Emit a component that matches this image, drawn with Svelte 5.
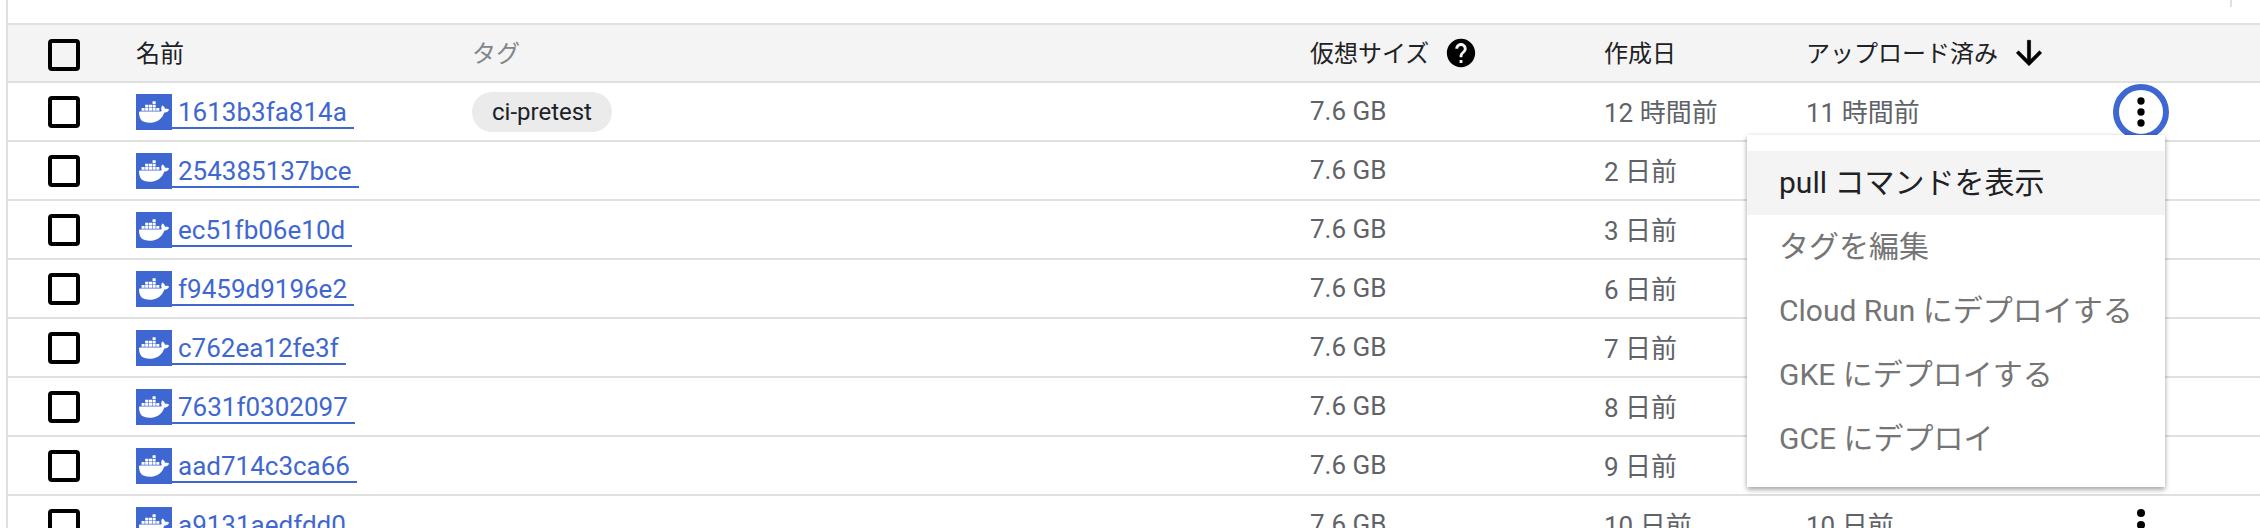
<script>
  const rows = [
    { id: '1613b3fa814a', tag: 'ci-pretest', created: '12 時間前', uploaded: '11 時間前', focused: true },
    { id: '254385137bce', created: '2 日前', uploaded: '2 日前' },
    { id: 'ec51fb06e10d', created: '3 日前', uploaded: '3 日前' },
    { id: 'f9459d9196e2', created: '6 日前', uploaded: '6 日前' },
    { id: 'c762ea12fe3f', created: '7 日前', uploaded: '7 日前' },
    { id: '7631f0302097', created: '8 日前', uploaded: '8 日前' },
    { id: 'aad714c3ca66', created: '9 日前', uploaded: '9 日前' },
    { id: 'a9131aedfdd0', created: '10 日前', uploaded: '10 日前' }
  ];

  const menu = [
    { label: 'pull コマンドを表示', active: true },
    { label: 'タグを編集' },
    { label: 'Cloud Run にデプロイする' },
    { label: 'GKE にデプロイする' },
    { label: 'GCE にデプロイ' }
  ];

  const whale =
    'M13.983 11.078h2.119a.186.186 0 00.186-.185V9.006a.186.186 0 00-.186-.186h-2.119a.185.185 0 00-.185.185v1.888c0 .102.083.185.185.185m-2.954-5.43h2.118a.186.186 0 00.186-.186V3.574a.186.186 0 00-.186-.185h-2.118a.185.185 0 00-.185.185v1.888c0 .102.082.185.185.186m0 2.716h2.118a.187.187 0 00.186-.186V6.29a.186.186 0 00-.186-.185h-2.118a.185.185 0 00-.185.185v1.887c0 .102.082.185.185.186m-2.93 0h2.12a.186.186 0 00.184-.186V6.29a.185.185 0 00-.185-.185H8.1a.185.185 0 00-.185.185v1.887c0 .102.083.185.185.186m-2.964 0h2.119a.186.186 0 00.185-.186V6.29a.185.185 0 00-.185-.185H5.136a.186.186 0 00-.186.185v1.887c0 .102.084.185.186.186m5.893 2.715h2.118a.186.186 0 00.186-.185V9.006a.186.186 0 00-.186-.186h-2.118a.185.185 0 00-.185.185v1.888c0 .102.082.185.185.185m-2.93 0h2.12a.185.185 0 00.184-.185V9.006a.185.185 0 00-.184-.186h-2.12a.185.185 0 00-.184.185v1.888c0 .102.083.185.185.185m-2.964 0h2.119a.185.185 0 00.185-.185V9.006a.185.185 0 00-.184-.186h-2.12a.186.186 0 00-.186.186v1.887c0 .102.084.185.186.185m-2.92 0h2.12a.185.185 0 00.184-.185V9.006a.185.185 0 00-.184-.186h-2.12a.185.185 0 00-.184.185v1.888c0 .102.082.185.185.185M23.763 9.89c-.065-.051-.672-.51-1.954-.51-.338.001-.676.03-1.01.087-.248-1.7-1.653-2.53-1.716-2.566l-.344-.199-.226.327c-.284.438-.49.922-.612 1.43-.23.97-.09 1.882.403 2.661-.595.332-1.55.413-1.744.42H.751a.751.751 0 00-.75.748 11.376 11.376 0 00.692 4.062c.545 1.428 1.355 2.48 2.41 3.124 1.18.723 3.1 1.137 5.275 1.137.983.003 1.963-.086 2.93-.266a12.248 12.248 0 003.823-1.389c.98-.567 1.86-1.288 2.61-2.136 1.252-1.418 1.998-2.997 2.553-4.4h.221c1.372 0 2.215-.549 2.68-1.009.309-.293.55-.65.707-1.046l.098-.288Z';
</script>

<div class="page">
  <div class="top"><span class="tick"></span></div>

  <div class="row head">
    <div class="cell-check"><span class="check"></span></div>
    <div class="cap">名前</div>
    <div class="cap muted">タグ</div>
    <div class="with-icon">
      <span class="cap">仮想サイズ</span>
      <svg class="help" viewBox="0 0 24 24" width="34" height="34" aria-hidden="true">
        <path d="M12 2C6.48 2 2 6.48 2 12s4.48 10 10 10 10-4.48 10-10S17.52 2 12 2zm1 17h-2v-2h2v2zm2.07-7.75l-.9.92C13.45 12.9 13 13.5 13 15h-2v-.5c0-1.1.45-2.1 1.17-2.83l1.24-1.26c.37-.36.59-.86.59-1.41 0-1.1-.9-2-2-2s-2 .9-2 2H8c0-2.21 1.79-4 4-4s4 1.79 4 4c0 .88-.36 1.68-.93 2.25z" />
      </svg>
    </div>
    <div class="cap">作成日</div>
    <div class="with-icon">
      <span class="cap">アップロード済み</span>
      <svg class="sort" viewBox="0 0 24 24" width="38" height="38" aria-hidden="true">
        <path d="M20 12l-1.41-1.41L13 16.17V4h-2v12.17l-5.58-5.59L4 12l8 8 8-8z" />
      </svg>
    </div>
    <div></div>
  </div>

  {#each rows as row}
    <div class="row">
      <div class="cell-check"><span class="check"></span></div>
      <div>
        <a class="link" href="#{row.id}">
          <span class="badge">
            <svg viewBox="0 0 24 24" width="30" height="30" aria-hidden="true"><path d={whale} fill="#fff" /></svg>
          </span>
          <span class="hash">{row.id}</span>
        </a>
      </div>
      <div>
        {#if row.tag}<span class="chip">{row.tag}</span>{/if}
      </div>
      <div class="value">7.6 GB</div>
      <div class="value">{row.created}</div>
      <div class="value">{row.uploaded}</div>
      <div>
        <button class="kebab" class:focused={row.focused} aria-label="その他">
          <svg viewBox="0 0 24 24" width="48" height="48" aria-hidden="true">
            <circle cx="12" cy="6" r="2" /><circle cx="12" cy="12" r="2" /><circle cx="12" cy="18" r="2" />
          </svg>
        </button>
      </div>
    </div>
  {/each}

  <ul class="menu">
    {#each menu as item}
      <li class:active={item.active}>{item.label}</li>
    {/each}
  </ul>
</div>

<style>
  :global(body) {
    margin: 0;
    overflow: hidden;
    background: #fff;
  }
  .page {
    position: relative;
    margin-left: 6px;
    border-left: 2px solid #e0e0e0;
    height: 528px;
    overflow: hidden;
    font-family: Roboto, 'Noto Sans CJK JP', sans-serif;
    font-size: 24px;
    color: #202124;
  }
  .top {
    height: 23px;
    display: flex;
    justify-content: flex-end;
    padding-right: 28px;
  }
  .tick {
    width: 2px;
    height: 7px;
    background: #e0e0e0;
  }
  .row {
    display: grid;
    grid-template-columns: 128px 336px 838px 294px 202px 307px 1fr;
    align-items: center;
    height: 57px;
    border-bottom: 2px solid #e0e0e0;
  }
  .head {
    background: #f4f4f4;
    height: 56px;
    border-top: 2px solid #e0e0e0;
  }
  .cap {
    margin-bottom: 3px;
  }
  .muted {
    color: #80868b;
  }
  .with-icon {
    display: flex;
    align-items: center;
    gap: 15px;
  }
  .cell-check {
    padding-left: 40px;
    display: flex;
  }
  .check {
    width: 32px;
    height: 32px;
    box-sizing: border-box;
    border: 4px solid #000;
    border-radius: 4px;
  }
  .head .check {
    margin-top: 4px;
  }
  .help {
    fill: #000;
  }
  .sort {
    fill: #000;
    stroke: #000;
    stroke-width: 0.4;
    margin-left: -3px;
  }
  .link {
    display: inline-flex;
    align-items: flex-end;
    text-decoration: none;
    color: #3f67d1;
    font-size: 26px;
    vertical-align: middle;
  }
  .badge {
    width: 36px;
    height: 36px;
    background: #3f67d1;
    display: flex;
    align-items: center;
    justify-content: center;
  }
  .hash {
    padding: 0 7px 0 6px;
    line-height: 30px;
    margin-bottom: 1px;
    border-bottom: 2px solid #3f67d1;
  }
  .chip {
    display: inline-flex;
    align-items: center;
    height: 40px;
    padding: 0 20px;
    border-radius: 20px;
    background: #ebebeb;
    color: #202124;
    font-size: 24px;
  }
  .value {
    color: #5f6368;
    font-size: 26px;
    margin-bottom: 2px;
  }
  .kebab {
    width: 56px;
    height: 56px;
    padding: 0;
    border: 0;
    border-radius: 50%;
    background: none;
    display: flex;
    align-items: center;
    justify-content: center;
    box-sizing: border-box;
  }
  .kebab.focused {
    border: 6px solid #3f67d1;
    background: #fff;
  }
  .menu {
    position: absolute;
    left: 1739px;
    top: 135px;
    width: 418px;
    margin: 0;
    padding: 16px 0;
    list-style: none;
    background: #fff;
    box-shadow: 0 3px 5px rgba(0, 0, 0, 0.3), 0 0 4px rgba(0, 0, 0, 0.1);
  }
  .menu li {
    height: 64px;
    box-sizing: border-box;
    padding: 0 0 6px 32px;
    display: flex;
    align-items: center;
    font-size: 30px;
    color: #757575;
    white-space: nowrap;
  }
  .menu li.active {
    background: #f4f4f4;
    color: #202124;
  }
</style>
